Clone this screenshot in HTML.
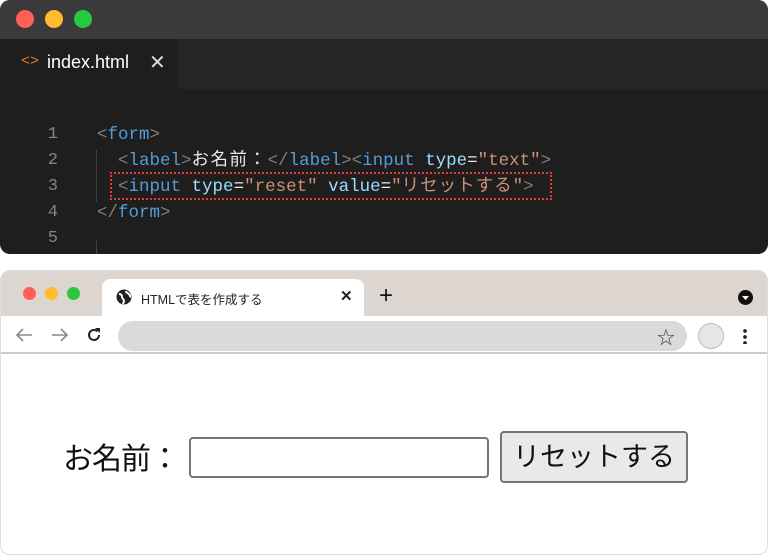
<!DOCTYPE html>
<html><head><meta charset="utf-8"><style>
*{margin:0;padding:0;box-sizing:border-box}
body{width:768px;height:555px;background:#fff;position:relative;overflow:hidden;font-family:"Liberation Sans","Noto Sans CJK JP",sans-serif}
.ed{position:absolute;left:0;top:0;width:768px;height:254px;background:#1e1e1e;border-radius:10px;overflow:hidden}
.tb{position:absolute;left:0;top:0;width:768px;height:39px;background:#3a3a3a}
.dot{position:absolute;border-radius:50%}
.tabs{position:absolute;left:0;top:39px;width:768px;height:50px;background:#252526}
.tab{position:absolute;left:0;top:0;width:178px;height:50px;background:#1e1e1e}
.code{position:absolute;font-family:"Liberation Mono","Noto Sans CJK JP",monospace;font-size:17.5px;line-height:20px;height:20px;color:#d4d4d4;white-space:pre}
.ln{position:absolute;left:40px;width:18px;text-align:right;color:#858585;font-family:"Liberation Mono",monospace;font-size:17px;line-height:20px}
.g{color:#808080}.t{color:#569cd6}.a{color:#9cdcfe}.s{color:#ce9178}.w{color:#e8e8e8}
.j{letter-spacing:1.5px}.k{letter-spacing:1px}
.br{position:absolute;left:0;top:270px;width:768px;height:285px;border:1px solid #ddd;border-radius:10px;overflow:hidden;background:#fff}
</style></head><body>
<div class="ed">
 <div class="tb"></div>
 <div class="dot" style="left:16px;top:10px;width:18px;height:18px;background:#fe5f57"></div>
 <div class="dot" style="left:45px;top:10px;width:18px;height:18px;background:#febc2e"></div>
 <div class="dot" style="left:74px;top:10px;width:18px;height:18px;background:#28c840"></div>
 <div class="tabs"><div class="tab">
  <span style="position:absolute;left:21px;top:14px;color:#e37933;font-size:15px;font-family:'Liberation Mono',monospace">&lt;&gt;</span>
  <span style="position:absolute;left:47px;top:13px;color:#fff;font-size:18px">index.html</span>
  <span style="position:absolute;left:149px;top:11px;color:#ddd;font-size:20px">✕</span>
 </div></div>
 <div class="ln" style="top:125px">1</div>
 <div class="ln" style="top:151px">2</div>
 <div class="ln" style="top:177px">3</div>
 <div class="ln" style="top:203px">4</div>
 <div class="ln" style="top:229px">5</div>
 <div style="position:absolute;left:96px;top:150px;width:1px;height:52px;background:#404040"></div>
 <div style="position:absolute;left:96px;top:240px;width:1px;height:14px;background:#404040"></div>
 <div class="code" style="left:97px;top:125px"><span class="g">&lt;</span><span class="t">form</span><span class="g">&gt;</span></div>
 <div class="code" style="left:118px;top:151px"><span class="g">&lt;</span><span class="t">label</span><span class="g">&gt;</span><span class="w j">お名前：</span><span class="g">&lt;/</span><span class="t">label</span><span class="g">&gt;&lt;</span><span class="t">input</span> <span class="a">type</span><span class="w">=</span><span class="s">"text"</span><span class="g">&gt;</span></div>
 <div class="code" style="left:118px;top:177px"><span class="g">&lt;</span><span class="t">input</span> <span class="a">type</span><span class="w">=</span><span class="s">"reset"</span> <span class="a">value</span><span class="w">=</span><span class="s">"<span class="k">リセットする</span>"</span><span class="g">&gt;</span></div>
 <div class="code" style="left:97px;top:203px"><span class="g">&lt;/</span><span class="t">form</span><span class="g">&gt;</span></div>
 <div style="position:absolute;left:110px;top:172px;width:442px;height:28px;border:2px dotted #e53935"></div>
</div>

<div class="br">
 <div style="position:absolute;left:0;top:0;width:768px;height:45px;background:#ddd5d0"></div>
 <div class="dot" style="left:22px;top:16px;width:13px;height:13px;background:#fe5f57"></div>
 <div class="dot" style="left:44px;top:16px;width:13px;height:13px;background:#febc2e"></div>
 <div class="dot" style="left:66px;top:16px;width:13px;height:13px;background:#28c840"></div>
 <div style="position:absolute;left:101px;top:8px;width:262px;height:38px;background:#fff;border-radius:8px 8px 0 0"></div>
 <svg style="position:absolute;left:115px;top:18px" width="16" height="16" viewBox="0 0 16 16"><circle cx="8" cy="8" r="7.5" fill="#222"/><path d="M3 5c2 0 3 1 3 3s2 2 2 4l-1 3M10 2c0 2 2 2 3 3s1 3 2 3" stroke="#fff" stroke-width="2" fill="none"/></svg>
 <span style="position:absolute;left:140px;top:18px;font-size:12.5px;color:#222">HTMLで表を作成する</span>
 <span style="position:absolute;left:339px;top:16px;font-size:15px;color:#222;font-weight:bold">✕</span>
 <span style="position:absolute;left:378px;top:11px;font-size:24px;color:#111">+</span>
 <svg style="position:absolute;left:737px;top:19px" width="15" height="15" viewBox="0 0 15 15"><circle cx="7.5" cy="7.5" r="7.5" fill="#111"/><path d="M4 6h7l-3.5 4z" fill="#fff"/></svg>
 <div style="position:absolute;left:0;top:45px;width:768px;height:38px;background:#fff;border-bottom:2px solid #ccc"></div>
 <svg style="position:absolute;left:14px;top:56px" width="18" height="16" viewBox="0 0 18 16"><path d="M17 8H2M8 2L2 8l6 6" stroke="#888" stroke-width="1.6" fill="none"/></svg>
 <svg style="position:absolute;left:50px;top:56px" width="18" height="16" viewBox="0 0 18 16"><path d="M1 8h15M10 2l6 6-6 6" stroke="#888" stroke-width="1.6" fill="none"/></svg>
 <svg style="position:absolute;left:85px;top:56px" width="16" height="16" viewBox="0 0 16 16"><path d="M13 8a5 5 0 1 1-1.5-3.6" stroke="#222" stroke-width="2" fill="none"/><path d="M9 1h5v5z" fill="#222"/></svg>
 <div style="position:absolute;left:117px;top:50px;width:569px;height:30px;background:#dadada;border-radius:15px"></div>
 <span style="position:absolute;left:656px;top:53px;font-size:18px;color:#444">☆</span>
 <div class="dot" style="left:697px;top:52px;width:26px;height:26px;background:#e6e6e6;border:1px solid #bbb"></div>
 <div style="position:absolute;left:742px;top:57px;width:4px;height:16px;background:radial-gradient(circle,#222 1.7px,transparent 2px) 0 0/4px 6px"></div>
 <span style="position:absolute;left:62px;top:163px;font-size:30px;color:#111;letter-spacing:-1px">お名前：</span>
 <div style="position:absolute;left:188px;top:166px;width:300px;height:41px;border:2px solid #767676;border-radius:4px"></div>
 <div style="position:absolute;left:499px;top:160px;width:188px;height:52px;border:2px solid #767676;border-radius:4px;background:#e9e9e9;text-align:center;font-size:27px;line-height:48px;color:#111">リセットする</div>
</div>
</body></html>
